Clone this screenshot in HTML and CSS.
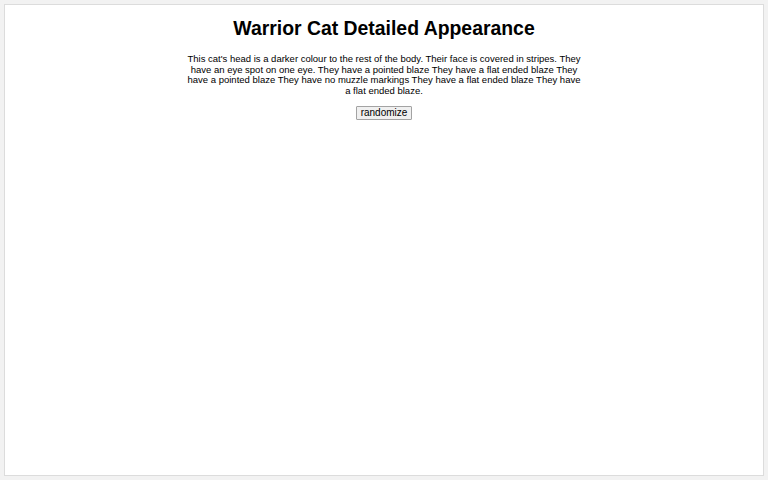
FILE: index.html
```html
<!DOCTYPE html>
<html lang="en">
<head>
    <meta charset="UTF-8">
    <meta name="viewport" content="width=device-width, initial-scale=1.0">
    <title>Warrior Cat Detailed Appearance</title>
    <link rel="stylesheet" href="styles.css">
</head>
<body>
    <div class="page">
        <h1 class="title">Warrior Cat Detailed Appearance</h1>
        <p class="desc">This cat's head is a darker colour to the rest of the body. Their face is covered in stripes. They have an eye spot on one eye. They have a pointed blaze They have a flat ended blaze They have a pointed blaze They have no muzzle markings They have a flat ended blaze They have a flat ended blaze.</p>
        <button class="btn">randomize</button>
    </div>
</body>
</html>
```

FILE: styles.css
```css
body{
    margin: 0;
    background: #f2f2f2;
    font-family: "Liberation Sans", Arial, sans-serif;
    padding: 4px;
    height: 480px;
    box-sizing: border-box;
}

.page{
    background: #fff;
    border: 1px solid #dcdcdc;
    height: 100%;
    box-sizing: border-box;
    display: flex;
    flex-direction: column;
    align-items: center;
}

.title{
    font-size: 19.4px;
    margin: 12px 0 0;
    line-height: 22px;
    color: #000;
}

.desc{
    width: 400px;
    margin: 15px 0 0;
    font-size: 9.5px;
    line-height: 10.7px;
    text-align: center;
    color: #000;
}

.btn{
    margin-top: 9px;
    font-family: "Liberation Sans", Arial, sans-serif;
    font-size: 10px;
    line-height: 12px;
    padding: 0 4px;
    background: #f0f0f0;
    border: 1px solid #a3a3a3;
    border-radius: 1px;
    color: #000;
}
```
